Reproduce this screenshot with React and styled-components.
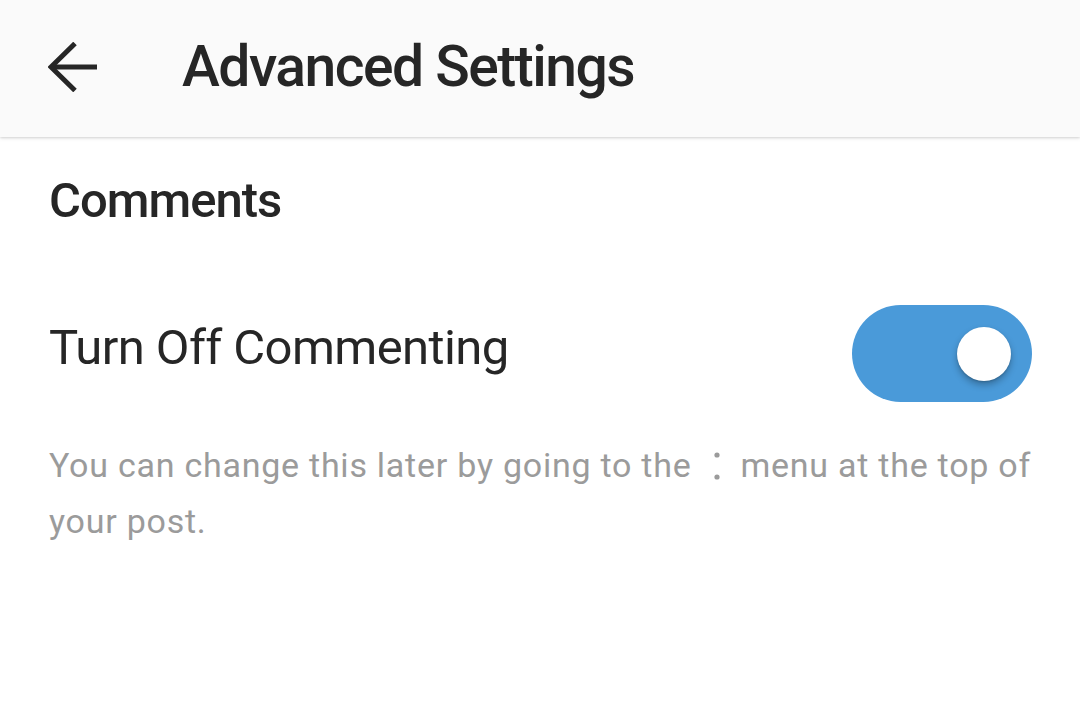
import React from "react";
import styled, { createGlobalStyle } from "styled-components";

const Global = createGlobalStyle`
  html, body { margin: 0; padding: 0; background: #ffffff; }
  body { font-family: Roboto, "Liberation Sans", sans-serif; width: 1080px; height: 720px; overflow: hidden; }
`;

const Page = styled.div`
  width: 1080px;
  height: 720px;
  background: #ffffff;
  display: flex;
  flex-direction: column;
`;

const Header = styled.header`
  height: 137px;
  box-sizing: border-box;
  background: #fafafa;
  display: flex;
  align-items: center;
  padding: 0 0 4px 48px;
  box-shadow: 0 1px 2px rgba(0, 0, 0, 0.12), 0 2px 4px rgba(0, 0, 0, 0.06);
  position: relative;
  z-index: 1;
`;

const BackButton = styled.button`
  border: 0;
  background: none;
  padding: 0;
  margin: 0 84px 0 0;
  width: 50px;
  height: 50px;
  display: flex;
  align-items: center;
  justify-content: center;
  color: #262626;
  cursor: pointer;
`;

const Title = styled.h1`
  margin: 0;
  font-family: Roboto, "Liberation Sans", sans-serif;
  font-weight: 500;
  font-size: 57px;
  line-height: 67px;
  letter-spacing: -1.5px;
  color: #262626;
`;

const Content = styled.main`
  padding: 35px 48px 0 48px;
  display: flex;
  flex-direction: column;
`;

const SectionTitle = styled.h2`
  margin: 0;
  font-weight: 500;
  font-size: 49px;
  line-height: 58px;
  letter-spacing: -1px;
  color: #262626;
  padding-left: 1px;
`;

const SettingRow = styled.div`
  margin-top: 75px;
  display: flex;
  align-items: center;
  justify-content: space-between;
  height: 97px;
`;

const SettingLabel = styled.span`
  font-weight: 400;
  font-size: 49px;
  line-height: 58px;
  letter-spacing: -0.6px;
  color: #262626;
  margin-bottom: 12px;
  padding-left: 1px;
`;

const Track = styled.button`
  position: relative;
  width: 180px;
  height: 97px;
  border: 0;
  padding: 0;
  border-radius: 49px;
  background: ${(p) => (p.$on ? "#4a9ad9" : "#bdbdbd")};
  cursor: pointer;
`;

const Knob = styled.span`
  position: absolute;
  top: 22px;
  ${(p) => (p.$on ? "right: 21px;" : "left: 21px;")}
  width: 54px;
  height: 54px;
  border-radius: 50%;
  background: #ffffff;
  box-shadow: 0 4px 7px rgba(0, 0, 0, 0.28), 0 1px 2px rgba(0, 0, 0, 0.15);
`;

const Hint = styled.p`
  margin: 35px -14px 0 0;
  font-size: 34px;
  line-height: 56px;
  color: #9b9b9b;
  letter-spacing: 0.75px;
  padding-left: 1px;
`;

const MenuDots = styled.svg`
  display: inline-block;
  width: 8px;
  height: 30px;
  margin: 0 19px 0 22px;
  vertical-align: -4px;
`;

const BackArrow = () => (
  <svg width="50" height="50" viewBox="0 0 50 50" fill="none">
    <path d="M49 25 H3" stroke="currentColor" strokeWidth="5" />
    <path d="M27 1.5 L3 25 L27 48.5" stroke="currentColor" strokeWidth="5" strokeLinejoin="miter" />
  </svg>
);

export default function App() {
  const on = true;
  return (
    <Page>
      <Global />
      <Header>
        <BackButton aria-label="Back">
          <BackArrow />
        </BackButton>
        <Title>Advanced Settings</Title>
      </Header>
      <Content>
        <SectionTitle>Comments</SectionTitle>
        <SettingRow>
          <SettingLabel>Turn Off Commenting</SettingLabel>
          <Track $on={on} aria-label="Turn Off Commenting">
            <Knob $on={on} />
          </Track>
        </SettingRow>
        <Hint>
          You can change this later by going to the
          <MenuDots viewBox="0 0 8 30">
            <circle cx="4" cy="4" r="2.6" fill="#9b9b9b" />
            <circle cx="4" cy="26" r="2.6" fill="#9b9b9b" />
          </MenuDots>
          menu at the top of your post.
        </Hint>
      </Content>
    </Page>
  );
}
